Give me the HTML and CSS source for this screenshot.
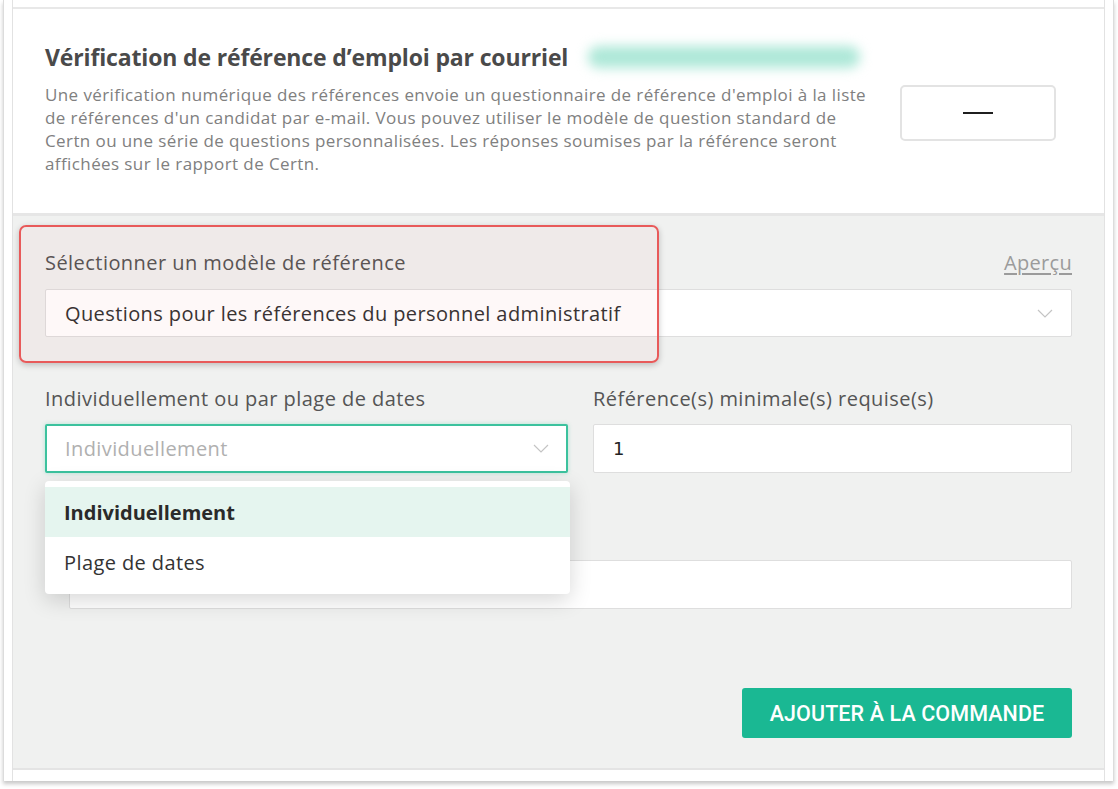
FILE: index.html
```html
<!DOCTYPE html>
<html lang="fr">
<head>
<meta charset="utf-8">
<title>Vérification de référence</title>
<link rel="stylesheet" href="styles.css">
</head>
<body>
<div class="window">
  <div class="card">
    <div class="prev-section"></div>
    <section class="intro">
      <div class="intro-text">
        <h2 class="title">Vérification de référence d’emploi par courriel <span class="blurred"></span></h2>
        <p class="desc">Une vérification numérique des références envoie un questionnaire de référence d'emploi à la liste<br>de références d'un candidat par e-mail. Vous pouvez utiliser le modèle de question standard de<br>Certn ou une série de questions personnalisées. Les réponses soumises par la référence seront<br>affichées sur le rapport de Certn.</p>
      </div>
      <button class="toggle-btn" type="button"><span class="dash"></span></button>
    </section>
    <section class="form">
      <div class="highlight"></div>
      <div class="label-row">
        <span class="label">Sélectionner un modèle de référence</span>
        <a class="preview">Aperçu</a>
      </div>
      <div class="select">
        <span class="value">Questions pour les références du personnel administratif</span>
        <svg class="chev" width="16" height="9" viewBox="0 0 16 9"><path d="M1 1 L8 8 L15 1" fill="none" stroke="#c4c4c4" stroke-width="1.2"/></svg>
      </div>
      <div class="row2">
        <div class="col">
          <span class="label">Individuellement ou par plage de dates</span>
          <div class="select focused">
            <span class="placeholder">Individuellement</span>
            <svg class="chev" width="16" height="9" viewBox="0 0 16 9"><path d="M1 1 L8 8 L15 1" fill="none" stroke="#c4c4c4" stroke-width="1.2"/></svg>
          </div>
          <ul class="menu">
            <li class="item active">Individuellement</li>
            <li class="item">Plage de dates</li>
          </ul>
        </div>
        <div class="col">
          <span class="label">Référence(s) minimale(s) requise(s)</span>
          <div class="input"><span class="num">1</span></div>
        </div>
      </div>
      <div class="row3">
        <div class="label-space"></div>
        <div class="input wide"></div>
      </div>
      <div class="actions">
        <button class="add-btn" type="button">AJOUTER À LA COMMANDE</button>
      </div>
    </section>
    <div class="next-section"></div>
  </div>
</div>
</body>
</html>
```
FILE: styles.css
```css
* { box-sizing: border-box; }
html, body { margin: 0; padding: 0; background: #ffffff; }
body {
  font-family: "Open Sans", "Liberation Sans", sans-serif;
  width: 1118px;
  height: 789px;
  overflow: hidden;
}
.window {
  margin: 0 4px 0 3px;
  height: 781px;
  border-left: 1px solid #dcdcdc;
  border-right: 1px solid #dcdcdc;
  padding: 0 8px;
  background: #ffffff;
  box-shadow: 0 3px 4px rgba(0,0,0,0.22);
  overflow: hidden;
}
.card {
  height: 781px;
  border-left: 1px solid #e2e2e2;
  border-right: 1px solid #e2e2e2;
  display: flex;
  flex-direction: column;
}
.prev-section {
  height: 9px;
  border-bottom: 2px solid #e8e8e8;
  flex: none;
}
.intro {
  display: flex;
  align-items: flex-start;
  padding: 33px 48px 38px 32px;
  border-bottom: 3px solid #e6e6e6;
  flex: none;
}
.intro-text { flex: 1; }
.title {
  margin: 0;
  font-family: "Open Sans", "Liberation Sans", sans-serif;
  font-size: 23px;
  font-weight: 700;
  letter-spacing: -0.15px;
  line-height: 30px;
  color: #4a4a4a;
  display: flex;
  align-items: center;
  white-space: nowrap;
}
.blurred {
  display: inline-block;
  width: 272px;
  height: 22px;
  margin-left: 20px;
  border-radius: 11px;
  background: #aee8d8;
  filter: blur(6px);
}
.desc {
  margin: 11px 0 0;
  font-size: 17px;
  letter-spacing: 0.4px;
  line-height: 23px;
  color: #808080;
  white-space: nowrap;
}
.toggle-btn {
  margin-top: 43px;
  margin-left: auto;
  flex: none;
  width: 156px;
  height: 56px;
  border: 2px solid #e3e3e3;
  border-radius: 5px;
  background: #ffffff;
  display: flex;
  align-items: center;
  justify-content: center;
  padding: 0;
}
.dash {
  display: block;
  width: 30px;
  height: 2px;
  background: #1f1f1f;
}
.form {
  position: relative;
  flex: 1;
  background: #f0f1f0;
  padding: 34px 32px 30px 32px;
  border-bottom: 2px solid #e4e4e4;
}
.highlight {
  position: absolute;
  left: 6px;
  top: 9px;
  width: 640px;
  height: 138px;
  border: 2px solid #e85a5a;
  border-radius: 7px;
  background: rgba(215, 60, 60, 0.035);
  box-shadow: 0 2px 6px rgba(0,0,0,0.22);
  z-index: 3;
}
.label-row {
  display: flex;
  justify-content: space-between;
  align-items: center;
  height: 26px;
}
.label {
  font-size: 20px;
  letter-spacing: 0.45px;
  line-height: 26px;
  color: #555555;
  display: block;
  white-space: nowrap;
}
.preview {
  font-size: 20px;
  letter-spacing: 0.3px;
  line-height: 26px;
  color: #9b9b9b;
  text-decoration: underline;
  text-underline-offset: 3px;
}
.select, .input {
  height: 48px;
  background: #ffffff;
  border: 1px solid #dedede;
  border-radius: 2px;
  display: flex;
  align-items: center;
  padding: 0 18px 0 19px;
  font-size: 20px;
  letter-spacing: 0.4px;
  color: #333333;
}
.label-row + .select { margin-top: 13px; }
.select .value { flex: 1; white-space: nowrap; }
.chev { flex: none; margin-left: auto; }
.row2 {
  display: grid;
  grid-template-columns: 523px 479px;
  column-gap: 25px;
  margin-top: 49px;
}
.col { position: relative; }
.col .label { margin-bottom: 12px; }
.select.focused {
  height: 49px;
  border: 2px solid #3cc29e;
  box-shadow: 0 0 4px rgba(60,194,158,0.35);
  padding-left: 18px;
  padding-right: 17px;
}
.placeholder { color: #b0b0b0; }
.input { height: 49px; }
.num {
  font-family: "DejaVu Sans", sans-serif;
  font-size: 18px;
  letter-spacing: 0;
  color: #222;
}
.menu {
  position: absolute;
  left: 0;
  top: 95px;
  width: 525px;
  margin: 0;
  padding: 6px 0 7px;
  list-style: none;
  background: #ffffff;
  border-radius: 4px;
  box-shadow: 0 6px 22px rgba(0,0,0,0.16);
  z-index: 5;
}
.item {
  height: 50px;
  display: flex;
  align-items: center;
  padding-left: 19px;
  font-size: 20px;
  letter-spacing: 0.4px;
  color: #333333;
}
.item.active {
  background: #e5f5ef;
  font-weight: 700;
  letter-spacing: 0;
  color: #2a2a2a;
}
.row3 {
  margin-top: 49px;
  padding-left: 24px;
}
.label-space { height: 26px; margin-bottom: 12px; }
.actions {
  display: flex;
  justify-content: flex-end;
  margin-top: 79px;
}
.add-btn {
  width: 330px;
  height: 50px;
  border: none;
  border-radius: 3px;
  background: #1ab893;
  color: #ffffff;
  font-family: "Roboto", "Liberation Sans", sans-serif;
  font-size: 21.5px;
  font-weight: 500;
  letter-spacing: 0.1px;
}
.next-section {
  height: 11px;
  flex: none;
}
```
